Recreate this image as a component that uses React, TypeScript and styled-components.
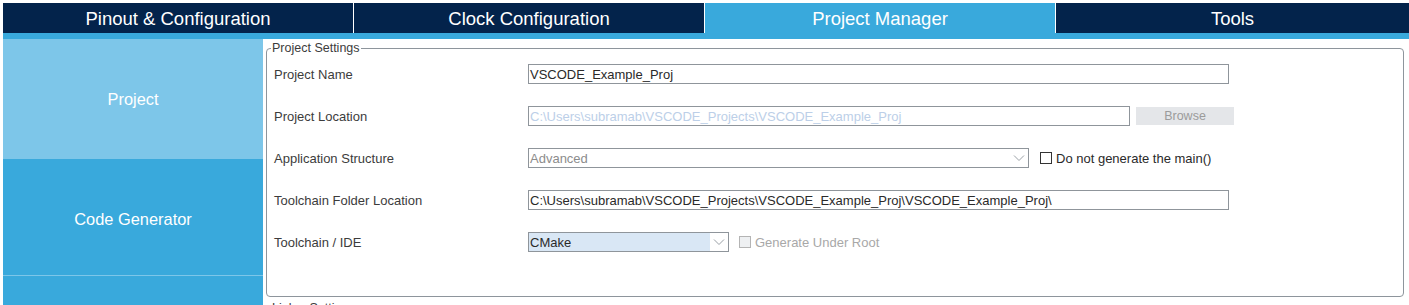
import styled, { createGlobalStyle } from "styled-components";

const GlobalStyle = createGlobalStyle`
    body {
        margin: 0;
        background: #ffffff;
        font-family: "Liberation Sans", Arial, sans-serif;
    }
`

const Page = styled.div`
    padding: 3px 0 0 3px;
    overflow: hidden;
    height: 302px;
`

const TabBar = styled.div`
    display: flex;
    gap: 1px;
    height: 30px;
`

const Tab = styled.div<{ $active?: boolean; $grow?: boolean }>`
    flex: ${p => p.$grow ? "1" : "0 0 350px"};
    display: flex;
    align-items: center;
    justify-content: center;
    padding-top: 2px;
    box-sizing: border-box;
    background: ${p => p.$active ? "#39a9dc" : "#03234b"};
    color: #ffffff;
    font-size: 18.5px;
`

const Strip = styled.div`
    height: 6px;
    background: #39a9dc;
`

const Body = styled.div`
    display: flex;
    gap: 3px;
`

const Sidebar = styled.div`
    width: 260px;
    flex-shrink: 0;
    display: flex;
    flex-direction: column;
    background: #39a9dc;
    height: 266px;
`

const SideItem = styled.div<{ $active?: boolean; $h: number }>`
    height: ${p => p.$h}px;
    display: flex;
    align-items: center;
    justify-content: center;
    padding-top: ${p => p.$active ? 1 : 4}px;
    box-sizing: border-box;
    background: ${p => p.$active ? "#7dc6e9" : "#39a9dc"};
    color: #ffffff;
    font-size: 16.4px;
    border-bottom: 1px solid #7dc6e9;
`

const Content = styled.div`
    flex: 1;
    padding-right: 5px;
`

const Group = styled.fieldset<{ $pb: number }>`
    margin: 2px 0 0 0;
    padding: 9px 0 ${p => p.$pb}px 7px;
    border: 1px solid #8e959c;
    border-radius: 4px;
    min-width: 0;
`

const Legend = styled.legend`
    font-size: 12.5px;
    line-height: 14px;
    color: #3c3c3c;
    padding: 0 1px;
    margin-left: -3px;
`

const Row = styled.div`
    display: flex;
    align-items: center;
    height: 20px;
    margin-bottom: 22px;

    &:last-child {
        margin-bottom: 0;
    }
`

const Label = styled.div`
    width: 254px;
    flex-shrink: 0;
    font-size: 13px;
    color: #3c3c3c;
`

const Field = styled.div<{ $w: number; $tone?: "dim" | "gray" }>`
    width: ${p => p.$w}px;
    height: 20px;
    box-sizing: border-box;
    border: 1px solid #8f959b;
    padding: 0 2px 0 1px;
    display: flex;
    align-items: center;
    font-size: 13px;
    white-space: nowrap;
    overflow: hidden;
    color: ${p => p.$tone === "dim" ? "#bccfe8" : p.$tone === "gray" ? "#8c8c8c" : "#2a2a2a"};
`

const SelectBox = styled(Field)`
    padding: 0;
    justify-content: space-between;
    background: #ffffff;
`

const SelectValue = styled.span<{ $fill?: string }>`
    flex: 1;
    align-self: stretch;
    display: flex;
    align-items: center;
    padding-left: 1px;
    background: ${p => p.$fill ?? "transparent"};
`

const Arrow = styled.span`
    width: 18px;
    display: flex;
    align-items: center;
    justify-content: center;
`

const Browse = styled.button`
    width: 98px;
    height: 18px;
    margin-left: 6px;
    border: none;
    background: #e4e6e9;
    color: #9b9b9b;
    font-family: "Liberation Sans", Arial, sans-serif;
    font-size: 12.5px;
    padding: 0;
`

const Check = styled.label<{ $disabled?: boolean; $gap: number }>`
    display: flex;
    align-items: center;
    gap: 4px;
    margin-left: ${p => p.$gap}px;
    font-size: 13px;
    color: ${p => p.$disabled ? "#a8a8a8" : "#2a2a2a"};
`

const Box = styled.span<{ $disabled?: boolean }>`
    width: 12px;
    height: 12px;
    box-sizing: border-box;
    border: 1px solid ${p => p.$disabled ? "#b4b4b4" : "#333333"};
    background: ${p => p.$disabled ? "#eef0f2" : "#ffffff"};
`

const NextGroup = styled.div`
    margin: 4px 0 0 6px;
    font-size: 12.5px;
    color: #3c3c3c;
`

function Chevron() {
    return (
        <svg width="12" height="8" viewBox="0 0 12 8">
            <polyline points="1,1.5 6,6.5 11,1.5" fill="none" stroke="#9aa0a6" strokeWidth="1" />
        </svg>
    )
}

export default function App() {
    return (
        <>
            <GlobalStyle />
            <Page>
                <TabBar>
                    <Tab>Pinout &amp; Configuration</Tab>
                    <Tab>Clock Configuration</Tab>
                    <Tab $active>Project Manager</Tab>
                    <Tab $grow>Tools</Tab>
                </TabBar>
                <Strip />
                <Body>
                    <Sidebar>
                        <SideItem $active $h={120}>Project</SideItem>
                        <SideItem $h={117}>Code Generator</SideItem>
                    </Sidebar>
                    <Content>
                        <Group $pb={44}>
                            <Legend>Project Settings</Legend>
                            <Row>
                                <Label>Project Name</Label>
                                <Field $w={701}>VSCODE_Example_Proj</Field>
                            </Row>
                            <Row>
                                <Label>Project Location</Label>
                                <Field $w={602} $tone="dim">C:\Users\subramab\VSCODE_Projects\VSCODE_Example_Proj</Field>
                                <Browse>Browse</Browse>
                            </Row>
                            <Row>
                                <Label>Application Structure</Label>
                                <SelectBox $w={501} $tone="gray">
                                    <SelectValue>Advanced</SelectValue>
                                    <Arrow><Chevron /></Arrow>
                                </SelectBox>
                                <Check $gap={11}>
                                    <Box />
                                    Do not generate the main()
                                </Check>
                            </Row>
                            <Row>
                                <Label>Toolchain Folder Location</Label>
                                <Field $w={701}>C:\Users\subramab\VSCODE_Projects\VSCODE_Example_Proj\VSCODE_Example_Proj\</Field>
                            </Row>
                            <Row>
                                <Label>Toolchain / IDE</Label>
                                <SelectBox $w={201}>
                                    <SelectValue $fill="#d9e7f5">CMake</SelectValue>
                                    <Arrow><Chevron /></Arrow>
                                </SelectBox>
                                <Check $gap={10} $disabled>
                                    <Box $disabled />
                                    Generate Under Root
                                </Check>
                            </Row>
                        </Group>
                        <NextGroup>Linker Settings</NextGroup>
                    </Content>
                </Body>
            </Page>
        </>
    )
}
